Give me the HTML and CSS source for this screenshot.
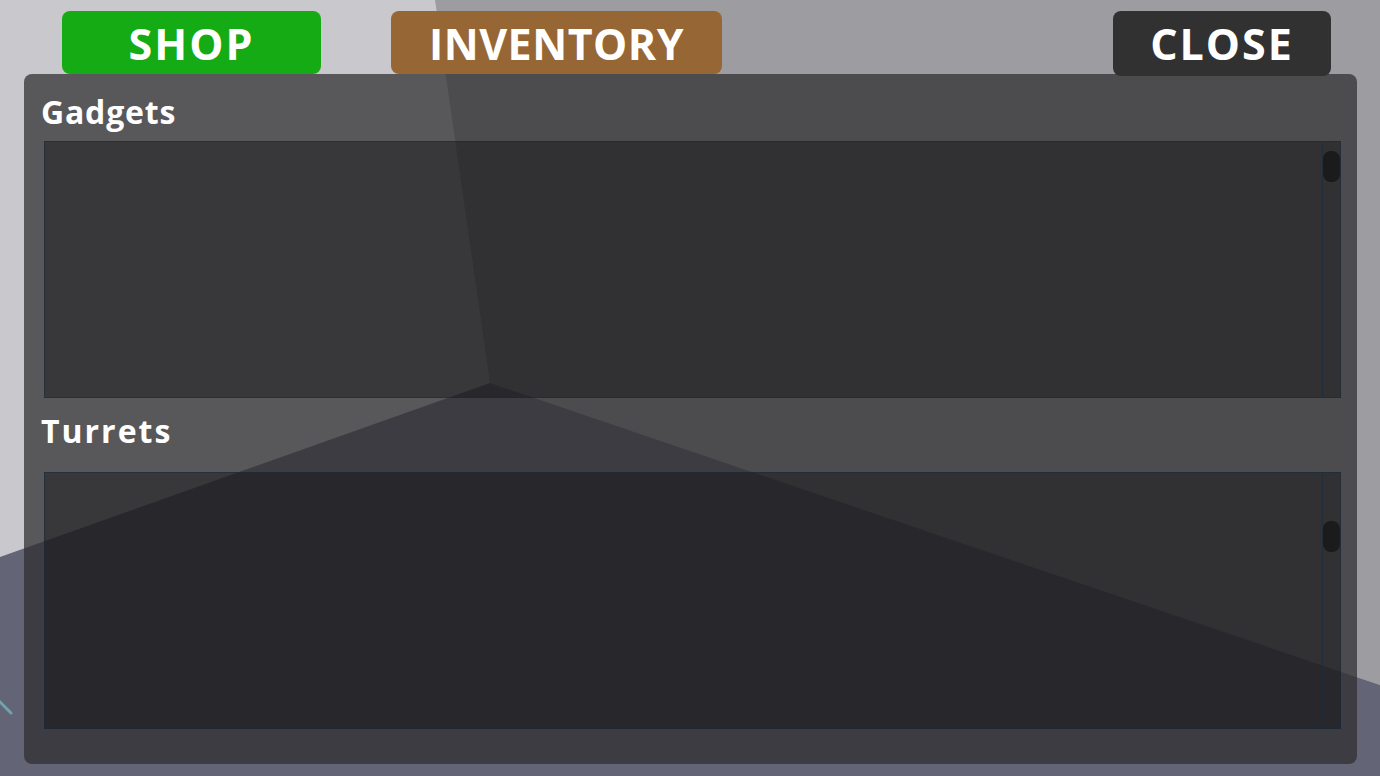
FILE: index.html
```html
<!DOCTYPE html>
<html lang="en">
<head>
<meta charset="utf-8">
<title>Shop</title>
<link rel="stylesheet" href="styles.css">
</head>
<body>
<div class="screen">
  <!-- world behind the menu -->
  <svg class="scene" width="1380" height="776" viewBox="0 0 1380 776" aria-hidden="true">
    <rect x="0" y="0" width="1380" height="776" fill="#c9c8cd"/>
    <polygon points="435,0 1380,0 1380,685 490,383" fill="#9d9ca1"/>
    <polygon points="0,557 490,383 1380,685 1380,776 0,776" fill="#646477"/>
    <line x1="-2" y1="700" x2="11" y2="713" stroke="#6fa3ad" stroke-width="3" stroke-linecap="round"/>
  </svg>

  <div class="ui">
    <nav class="tabs">
      <button class="tab tab-shop">SHOP</button>
      <button class="tab tab-inventory">INVENTORY</button>
      <button class="tab tab-close">CLOSE</button>
    </nav>

    <section class="panel">
      <h2 class="section-title">Gadgets</h2>
      <div class="list">
        <div class="list-items"></div>
        <div class="scrollbar"><div class="thumb" style="margin-top: 9px"></div></div>
      </div>

      <h2 class="section-title section-title-second">Turrets</h2>
      <div class="list">
        <div class="list-items"></div>
        <div class="scrollbar"><div class="thumb" style="margin-top: 48px"></div></div>
      </div>
    </section>
  </div>
</div>
</body>
</html>
```

FILE: styles.css
```css
* {
  box-sizing: border-box;
}

html, body {
  margin: 0;
  padding: 0;
  overflow: hidden;
}

body {
  font-family: "Open Sans", "Noto Sans", sans-serif;
  color: #fff;
}

.screen {
  position: relative;
  width: 1380px;
  height: 776px;
  overflow: hidden;
}

.scene {
  position: absolute;
  left: 0;
  top: 0;
  display: block;
}

.ui {
  position: relative;
}

/* top tab row */
.tabs {
  display: flex;
  align-items: flex-start;
  padding: 11px 49px 0 62px;
  height: 74px;
}

.tab {
  border: 0;
  margin: 0;
  padding: 0;
  height: 63px;
  border-radius: 8px;
  font-family: inherit;
  font-weight: 700;
  font-size: 43px;
  line-height: 65px;
  letter-spacing: 1px;
  color: #fff;
  text-align: center;
  cursor: pointer;
}

.tab-shop {
  width: 259px;
  background: #14ab14;
  letter-spacing: 2px;
}

.tab-inventory {
  width: 331px;
  margin-left: 70px;
  background: #966634;
  letter-spacing: 0.5px;
}

.tab-close {
  width: 218px;
  height: 65px;
  margin-left: auto;
  background: #313131;
  letter-spacing: 2px;
  position: relative;
  z-index: 1;
}

/* main window */
.panel {
  width: 1333px;
  height: 690px;
  margin-left: 24px;
  padding: 18px 16px 35px 20px;
  border-radius: 8px;
  background: rgba(44, 44, 46, 0.72);
}

.section-title {
  margin: 0 0 9px -3px;
  height: 40px;
  font-size: 32px;
  line-height: 40px;
  font-weight: 700;
  letter-spacing: 0.8px;
}

.section-title-second {
  margin-top: 13px;
  margin-bottom: 21px;
  letter-spacing: 2px;
}

.list {
  display: flex;
  height: 257px;
  border: 1px solid rgba(24, 44, 60, 0.6);
  background: rgba(12, 12, 14, 0.42);
}

.list-items {
  flex: 1;
}

.scrollbar {
  width: 18px;
  border-left: 1px solid rgba(24, 44, 60, 0.6);
}

.thumb {
  width: 17px;
  height: 31px;
  border-radius: 8px;
  background: #1b1b1b;
}
```
